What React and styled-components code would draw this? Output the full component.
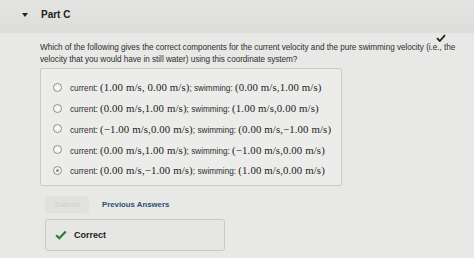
import React from 'react';
import styled, { createGlobalStyle } from 'styled-components';

const Global = createGlobalStyle`
  html, body { margin: 0; padding: 0; }
  body {
    background: #e8e8e6;
    font-family: "Liberation Sans", Arial, sans-serif;
    color: #2b2b2b;
    width: 474px;
    height: 258px;
    overflow: hidden;
  }
`;

const options = [
  { cur: '(1.00 m/s, 0.00 m/s)', swim: '(0.00 m/s,1.00 m/s)' },
  { cur: '(0.00 m/s,1.00 m/s)', swim: '(1.00 m/s,0.00 m/s)' },
  { cur: '(−1.00 m/s,0.00 m/s)', swim: '(0.00 m/s,−1.00 m/s)' },
  { cur: '(0.00 m/s,1.00 m/s)', swim: '(−1.00 m/s,0.00 m/s)' },
  { cur: '(0.00 m/s,−1.00 m/s)', swim: '(1.00 m/s,0.00 m/s)', selected: true },
];

const App = () => (
  <Page>
    <Global />
    <Header>
      <Caret />
      <Title>Part C</Title>
    </Header>
    <Body>
      <Tick>
        <svg width="10" height="8" viewBox="0 0 10 8">
          <path d="M1 4.2 L3.8 7 L9 1.2" fill="none" stroke="#222" strokeWidth="1.8" />
        </svg>
      </Tick>
      <Question>
        Which of the following gives the correct components for the current velocity and the pure swimming velocity (i.e., the
        <br />
        velocity that you would have in still water) using this coordinate system?
      </Question>
      <Options>
        {options.map((o, i) => (
          <Option key={i}>
            <Radio selected={o.selected} />
            <Label>
              current: <Math>{o.cur}</Math>; swimming: <Math>{o.swim}</Math>
            </Label>
          </Option>
        ))}
      </Options>
      <Actions>
        <SubmitButton>Submit</SubmitButton>
        <PrevLink>Previous Answers</PrevLink>
      </Actions>
      <Feedback>
        <svg width="12" height="10" viewBox="0 0 12 10">
          <path d="M1.2 5.2 L4.3 8.2 L10.8 1.5" fill="none" stroke="#2f7a3a" strokeWidth="2.2" />
        </svg>
        <FeedbackText>Correct</FeedbackText>
      </Feedback>
    </Body>
  </Page>
);

const Page = styled.div`
  width: 474px;
  height: 258px;
`;

const Header = styled.div`
  display: flex;
  align-items: center;
  height: 33px;
  padding-left: 22px;
  background: linear-gradient(180deg, #e4e4e2, #dcdcda);
`;

const Caret = styled.span`
  width: 0;
  height: 0;
  border-left: 3.5px solid transparent;
  border-right: 3.5px solid transparent;
  border-top: 4px solid #222;
  margin-right: 13px;
  margin-top: -4px;
`;

const Title = styled.span`
  font-size: 10px;
  font-weight: bold;
  color: #222;
  margin-top: -4px;
`;

const Body = styled.div`
  position: relative;
  padding: 9px 0 0 40px;
`;

const Tick = styled.span`
  position: absolute;
  display: flex;
  right: 28px;
  top: 1px;
`;

const Question = styled.p`
  margin: 0;
  white-space: nowrap;
  font-size: 8.2px;
  letter-spacing: -0.04px;
  line-height: 11.5px;
  color: #2e2e2e;
`;

const Options = styled.div`
  margin-top: 3px;
  width: 302px;
  height: 118px;
  border: 1px solid #c9c9c7;
  border-radius: 2px;
  background: #ececea;
  padding: 9px 0 0 12px;
  box-sizing: border-box;
  display: flex;
  flex-direction: column;
  gap: 2px;
`;

const Option = styled.div`
  display: flex;
  align-items: center;
  height: 18.75px;
`;

const Radio = styled.span`
  flex-shrink: 0;
  width: 7px;
  height: 7px;
  border-radius: 50%;
  border: 1px solid #8e8e8e;
  background: #f6f6f4;
  margin-right: 8px;
  display: flex;
  align-items: center;
  justify-content: center;
  &::after {
    content: '';
    display: ${p => (p.selected ? 'block' : 'none')};
    width: 3px;
    height: 3px;
    border-radius: 50%;
    background: #8a8a8a;
  }
`;

const Label = styled.span`
  font-size: 8.2px;
  color: #2e2e2e;
  white-space: nowrap;
`;

const Math = styled.span`
  font-family: "Liberation Serif", "Times New Roman", serif;
  font-size: 10.8px;
  letter-spacing: 0.12px;
  color: #222;
`;

const Actions = styled.div`
  display: flex;
  align-items: center;
  margin-top: 10px;
  margin-left: 5px;
  gap: 13px;
`;

const SubmitButton = styled.button`
  width: 44px;
  height: 17px;
  border: none;
  border-radius: 2px;
  background: #e1e1df;
  color: #cfcfcd;
  font-family: "Liberation Sans", Arial, sans-serif;
  font-size: 8px;
  padding: 0;
`;

const PrevLink = styled.span`
  font-size: 7.8px;
  font-weight: bold;
  color: #2c4f72;
`;

const Feedback = styled.div`
  display: flex;
  align-items: center;
  gap: 7px;
  margin-top: 6px;
  margin-left: 5px;
  width: 180px;
  height: 32px;
  box-sizing: border-box;
  padding-left: 9px;
  border: 1px solid #c9c9c7;
  border-radius: 3px;
  background: #e6e6e4;
`;

const FeedbackText = styled.span`
  font-size: 9px;
  font-weight: bold;
  color: #222;
`;

export default App;
